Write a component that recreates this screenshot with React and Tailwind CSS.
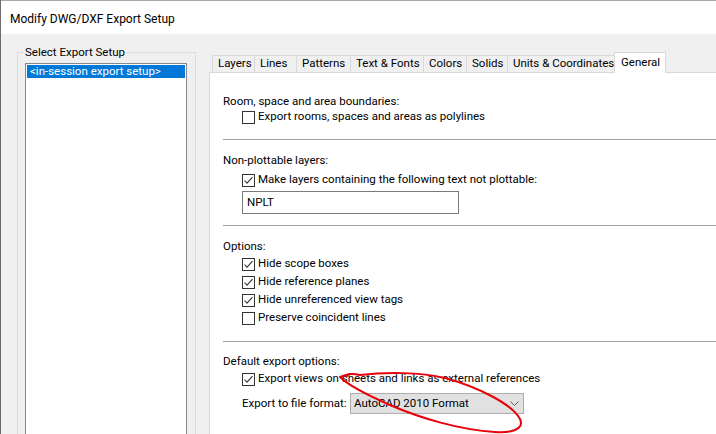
import React from 'react';

const tabs = [
  { label: 'Layers', w: 'w-[42px]' },
  { label: 'Lines', w: 'w-[42px]' },
  { label: 'Patterns', w: 'w-[54px]' },
  { label: 'Text & Fonts', w: 'w-[73px]' },
  { label: 'Colors', w: 'w-[43px]' },
  { label: 'Solids', w: 'w-[41px]' },
  { label: 'Units & Coordinates', w: 'w-[107px]' },
];

function Check({ checked, label }) {
  return (
    <div className="h-[18px] flex items-center pl-[19px]">
      <span className="w-[13px] h-[13px] border border-[#333333] bg-white flex items-center justify-center shrink-0">
        {checked && (
          <svg width="11" height="11" viewBox="0 0 11 11">
            <polyline points="1.5,5.5 4,8.2 9.5,2.2" fill="none" stroke="#333333" strokeWidth="1.1" />
          </svg>
        )}
      </span>
      <span className="ml-[3px] whitespace-nowrap">{label}</span>
    </div>
  );
}

function Separator({ className }) {
  return <div className={`h-px bg-[#a0a0a0] ${className}`} />;
}

export default function App() {
  return (
    <div className="w-[716px] h-[434px] overflow-hidden relative bg-[#f0f0f0] border-l border-[#6b6b6b] font-['Roboto',sans-serif] text-[11.5px] text-black">
      {/* Title bar */}
      <div className="h-[34px] bg-white border-t border-[#a8a8a8] flex items-center pl-[9px] pt-[2px]">
        <span className="text-[12px]">Modify DWG/DXF Export Setup</span>
      </div>

      <div className="flex items-start">
        {/* Select Export Setup group */}
        <fieldset className="ml-[16px] mt-[10px] w-[179px] h-[420px] border border-[#dcdcdc] px-[7px] pt-[3px]">
          <legend className="leading-[16px] px-px -ml-px">Select Export Setup</legend>
          <div className="w-[162px] h-[400px] border border-[#828790] bg-white p-px">
            <div className="h-[13px] leading-[13px] bg-[#0078d7] text-white pl-[3px] whitespace-nowrap">
              &lt;in-session export setup&gt;
            </div>
          </div>
        </fieldset>

        {/* Tabs */}
        <div className="ml-[13px] flex-1 flex flex-col mt-[18px]">
          <div className="h-[20px] flex items-end pl-[3px]">
            {tabs.map(t => (
              <div
                key={t.label}
                className={`${t.w} h-[17px] border-l border-t border-[#d9d9d9] bg-[#f0f0f0] flex items-center pl-[5px] whitespace-nowrap`}
              >
                {t.label}
              </div>
            ))}
            <div className="w-[52px] h-[21px] -mb-px relative z-10 border-l border-t border-r border-[#d9d9d9] bg-white flex items-center pl-[6px]">
              General
            </div>
          </div>

          <div className="h-[400px] border-t border-l border-[#d9d9d9] bg-white pl-[13px] pt-[21px] flex flex-col">
            <div className="leading-[14px] h-[14px]">Room, space and area boundaries:</div>
            <Check label="Export rooms, spaces and areas as polylines" />
            <Separator className="mt-[13px]" />

            <div className="mt-[11px] h-[18px] leading-[18px]">Non-plottable layers:</div>
            <div className="mt-[2px]">
              <Check checked label="Make layers containing the following text not plottable:" />
            </div>
            <div className="mt-[2px] ml-[19px] w-[217px] h-[23px] border border-[#7a7a7a] flex items-center pl-[4px]">
              NPLT
            </div>
            <Separator className="mt-[11px]" />

            <div className="mt-[11px] h-[18px] leading-[18px]">Options:</div>
            <Check checked label="Hide scope boxes" />
            <Check checked label="Hide reference planes" />
            <Check checked label="Hide unreferenced view tags" />
            <Check label="Preserve coincident lines" />
            <Separator className="mt-[14px]" />

            <div className="mt-[10px] h-[18px] leading-[18px]">Default export options:</div>
            <Check checked label="Export views on sheets and links as external references" />
            <div className="mt-[5px] h-[21px] flex items-center pl-[19px]">
              <span className="w-[108px] whitespace-nowrap">Export to file format:</span>
              <div className="w-[174px] h-[21px] border border-[#adadad] bg-[#e1e1e1] flex items-center justify-between pl-[3px] pr-[4px]">
                <span>AutoCAD 2010 Format</span>
                <svg width="9" height="5" viewBox="0 0 9 5">
                  <polyline points="0.5,0.5 4.5,4.5 8.5,0.5" fill="none" stroke="#606060" strokeWidth="1" />
                </svg>
              </div>
            </div>
          </div>
        </div>
      </div>

      {/* red annotation scribble */}
      <svg className="absolute -left-px top-0 pointer-events-none" width="716" height="434" viewBox="0 0 716 434">
        <path
          d="M 347 376 C 345 374 352 373 360 375 C 385 372 420 372 445 378 C 478 387 512 404 520 419 C 525 430 510 433 495 432 C 460 430 420 418 390 405 C 365 394 348 385 340 377 L 346 375"
          fill="none"
          stroke="#e8000b"
          strokeWidth="2"
          strokeLinecap="round"
          strokeLinejoin="round"
        />
      </svg>
    </div>
  );
}
